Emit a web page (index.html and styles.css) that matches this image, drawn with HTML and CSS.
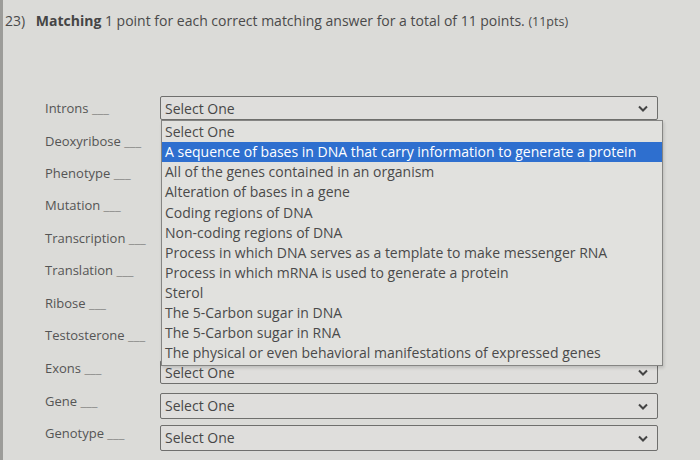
FILE: index.html
```html
<!DOCTYPE html>
<html lang="en">
<head>
    <meta charset="UTF-8">
    <title>Question 23 - Matching</title>
    <link rel="stylesheet" href="styles.css">
</head>
<body>

    <div class="question">
        <!-- Question header -->
        <div class="q-head">
            <span class="q-num">23)</span>
            <span class="q-type">Matching</span>
            <span class="q-text">1 point for each correct matching answer for a total of 11 points.</span>
            <span class="q-pts">(11pts)</span>
        </div>

        <!-- Matching rows -->
        <div class="match-list">
            <div class="match-row">
                <span class="term">Introns <span class="blank">___</span></span>
                <div class="select-box open">
                    <span>Select One</span>
                    <svg class="chev" width="10" height="7" viewBox="0 0 10 7"><path d="M1 1.5 L5 5.5 L9 1.5" fill="none" stroke="#444" stroke-width="2"/></svg>
                    <!-- open dropdown list -->
                    <ul class="options">
                        <li>Select One</li>
                        <li class="active">A sequence of bases in DNA that carry information to generate a protein</li>
                        <li>All of the genes contained in an organism</li>
                        <li>Alteration of bases in a gene</li>
                        <li>Coding regions of DNA</li>
                        <li>Non-coding regions of DNA</li>
                        <li>Process in which DNA serves as a template to make messenger RNA</li>
                        <li>Process in which mRNA is used to generate a protein</li>
                        <li>Sterol</li>
                        <li>The 5-Carbon sugar in DNA</li>
                        <li>The 5-Carbon sugar in RNA</li>
                        <li>The physical or even behavioral manifestations of expressed genes</li>
                    </ul>
                </div>
            </div>
            <div class="match-row">
                <span class="term">Deoxyribose <span class="blank">___</span></span>
            </div>
            <div class="match-row">
                <span class="term">Phenotype <span class="blank">___</span></span>
            </div>
            <div class="match-row">
                <span class="term">Mutation <span class="blank">___</span></span>
            </div>
            <div class="match-row">
                <span class="term">Transcription <span class="blank">___</span></span>
            </div>
            <div class="match-row">
                <span class="term">Translation <span class="blank">___</span></span>
            </div>
            <div class="match-row">
                <span class="term">Ribose <span class="blank">___</span></span>
            </div>
            <div class="match-row">
                <span class="term">Testosterone <span class="blank">___</span></span>
            </div>
            <div class="match-row">
                <span class="term">Exons <span class="blank">___</span></span>
                <div class="select-box closed">
                    <span>Select One</span>
                    <svg class="chev" width="10" height="7" viewBox="0 0 10 7"><path d="M1 1.5 L5 5.5 L9 1.5" fill="none" stroke="#444" stroke-width="2"/></svg>
                </div>
            </div>
            <div class="match-row">
                <span class="term">Gene <span class="blank">___</span></span>
                <div class="select-box closed tall">
                    <span>Select One</span>
                    <svg class="chev" width="10" height="7" viewBox="0 0 10 7"><path d="M1 1.5 L5 5.5 L9 1.5" fill="none" stroke="#444" stroke-width="2"/></svg>
                </div>
            </div>
            <div class="match-row">
                <span class="term">Genotype <span class="blank">___</span></span>
                <div class="select-box closed tall">
                    <span>Select One</span>
                    <svg class="chev" width="10" height="7" viewBox="0 0 10 7"><path d="M1 1.5 L5 5.5 L9 1.5" fill="none" stroke="#444" stroke-width="2"/></svg>
                </div>
            </div>
        </div>
    </div>

</body>
</html>
```

FILE: styles.css
```css
/* Page */
body {
    margin: 0;
    height: 460px;
    overflow: hidden;
    background-color: #dbdbd8;
    border-left: 3px solid #9c9c99;
    font-family: "Open Sans", "Noto Sans", sans-serif;
    color: #4a4a4a;
}

.question {
    padding: 11px 0 0 2px;
}

/* Header line */
.q-head {
    font-size: 14px;
    line-height: 20px;
    height: 81px;
    color: #4a4a4a;
}

.q-num {
    margin-right: 7px;
}

.q-type {
    font-weight: bold;
    color: #454545;
}

.q-pts {
    font-size: 12.5px;
}

/* Rows */
.match-list {
    display: flex;
    flex-direction: column;
}

.match-row {
    display: grid;
    grid-template-columns: 155px 498px;
    align-items: center;
    height: 32.4px;
}

.term {
    padding-left: 40px;
    font-size: 13px;
    color: #555;
    white-space: nowrap;
}

.blank {
    color: #8a8a88;
}

/* Select boxes */
.select-box {
    position: relative;
    display: flex;
    align-items: center;
    justify-content: space-between;
    height: 22px;
    padding: 0 9px 0 4px;
    border: 1px solid #6f6f6d;
    border-radius: 2px;
    background-color: #dfdedc;
    font-size: 14px;
    color: #474747;
}

.select-box.closed {
    margin-top: 9px;
}

.select-box.tall {
    height: 24px;
}

.chev {
    margin-top: 1px;
}

/* Open dropdown */
.options {
    position: absolute;
    top: 23px;
    left: 0;
    width: 500px;
    margin: 0;
    padding: 1px 0 2px;
    list-style: none;
    background-color: #e1e1de;
    border: 1px solid #858583;
    box-shadow: 1px 2px 3px rgba(0, 0, 0, 0.15);
    z-index: 2;
}

.options li {
    height: 20.1px;
    line-height: 20px;
    padding-left: 3px;
    white-space: nowrap;
    color: #4a4a4a;
}

.options li.active {
    background-color: #2e6fcf;
    color: #fff;
}
```
